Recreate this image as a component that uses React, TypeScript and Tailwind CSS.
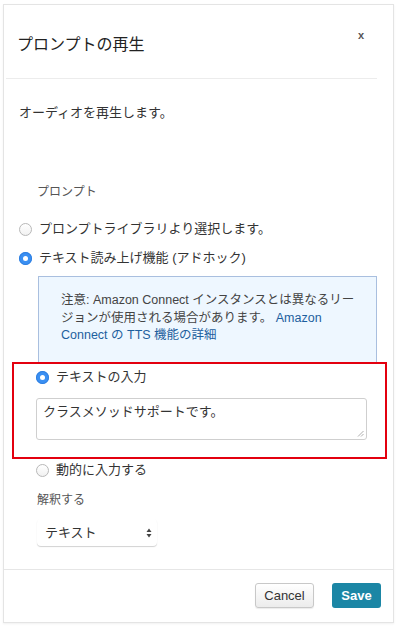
import React from "react";

function Radio({ checked }: { checked?: boolean }) {
  if (checked) {
    return (
      <span className="flex h-[13px] w-[13px] shrink-0 items-center justify-center rounded-full bg-[#3a8ff2] shadow-[inset_0_0_0_1px_#2f7fe0]">
        <span className="h-[5px] w-[5px] rounded-full bg-white" />
      </span>
    );
  }
  return (
    <span className="h-[13px] w-[13px] shrink-0 rounded-full border border-[#b8b8b8] bg-gradient-to-b from-white to-[#f1f1f1]" />
  );
}

export default function App() {
  return (
    <div className="h-[628px] w-[400px] bg-white font-['Liberation_Sans','Noto_Sans_CJK_JP',sans-serif] text-[#333]">
      <div className="ml-[3px] pt-[4px]">
        <div className="flex h-[619px] w-[391px] flex-col border border-[#e4e4e4] bg-white shadow-[0_1px_2px_rgba(0,0,0,0.06)]">
          {/* header */}
          <div className="flex h-[73px] items-start justify-between pl-[13px] pr-[29px] pt-[28px]">
            <h1 className="text-[16px] leading-[24px] text-[#222]">プロンプトの再生</h1>
            <span className="mt-[-6px] text-[11px] font-bold leading-[16px] text-[#555]">x</span>
          </div>
          <div className="ml-[2px] h-px w-[371px] bg-[#ececec]" />

          {/* body */}
          <div className="flex flex-1 flex-col">
            <p className="ml-[15px] mt-[24px] text-[13px] leading-[20px]">オーディオを再生します。</p>

            <p className="ml-[33px] mt-[60px] text-[12px] leading-[18px] text-[#555]">プロンプト</p>

            <label className="ml-[15px] mt-[18px] flex h-[20px] items-center gap-[7px] text-[13px]">
              <Radio />
              <span>プロンプトライブラリより選択します。</span>
            </label>
            <label className="ml-[15px] mt-[9px] flex h-[20px] items-center gap-[7px] text-[13px]">
              <Radio checked />
              <span>テキスト読み上げ機能 (アドホック)</span>
            </label>

            <div className="ml-[34px] mt-[8px] h-[86px] w-[339px] border border-b-0 border-[#a9bfdf] bg-[#eef7ff] pl-[22px] pr-[20px] pt-[15px] text-[12.5px] leading-[17.5px] text-[#444]">
              注意: Amazon Connect インスタンスとは異なるリージョンが使用される場合があります。{" "}
              <span className="text-[#1d5f9e]">Amazon Connect の TTS 機能の詳細</span>
            </div>

            {/* highlighted section */}
            <div className="ml-[8px] h-[97px] w-[375px] border-2 border-[#e3000f] pl-[22px] pt-[3px]">
              <label className="flex h-[20px] items-center gap-[7px] text-[13px]">
                <Radio checked />
                <span>テキストの入力</span>
              </label>
              <div className="relative mt-[11px] h-[42px] w-[331px] rounded-[3px] border border-[#cfcfcf] bg-white pl-[6px] pt-[3px] text-[13px] leading-[20px] text-[#333]">
                クラスメソッドサポートです。
                <svg className="absolute bottom-[2px] right-[2px]" width="7" height="7" viewBox="0 0 7 7">
                  <path d="M6.5 1 L1 6.5 M6.5 4 L4 6.5" stroke="#999" strokeWidth="0.8" />
                </svg>
              </div>
            </div>

            <label className="ml-[32px] mt-[1px] flex h-[20px] items-center gap-[7px] text-[13px]">
              <Radio />
              <span>動的に入力する</span>
            </label>

            <p className="ml-[33px] mt-[11px] text-[12px] leading-[18px] text-[#555]">解釈する</p>

            <div className="ml-[33px] mt-[10px] flex h-[27px] w-[120px] items-center justify-between rounded-[4px] bg-white pl-[8px] pr-[5px] text-[13px] shadow-[0_1px_1px_rgba(0,0,0,0.18)]">
              <span>テキスト</span>
              <svg width="6" height="10" viewBox="0 0 6 10">
                <path d="M3 0.5 L5.5 4 H0.5 Z" fill="#444" />
                <path d="M3 9.5 L5.5 6 H0.5 Z" fill="#444" />
              </svg>
            </div>
          </div>

          {/* footer */}
          <div className="h-px w-full bg-[#e6e6e6]" />
          <div className="flex h-[52px] items-start justify-end gap-[18px] pr-[12px] pt-[13px]">
            <button className="h-[25px] w-[59px] rounded-[3px] border border-[#c8c8c8] bg-gradient-to-b from-white to-[#ececec] text-[13px] text-[#333] shadow-[0_1px_1px_rgba(0,0,0,0.08)]">
              Cancel
            </button>
            <button className="h-[25px] w-[49px] rounded-[3px] bg-[#1b86a5] text-[13px] font-bold text-white">
              Save
            </button>
          </div>
        </div>
      </div>
    </div>
  );
}
